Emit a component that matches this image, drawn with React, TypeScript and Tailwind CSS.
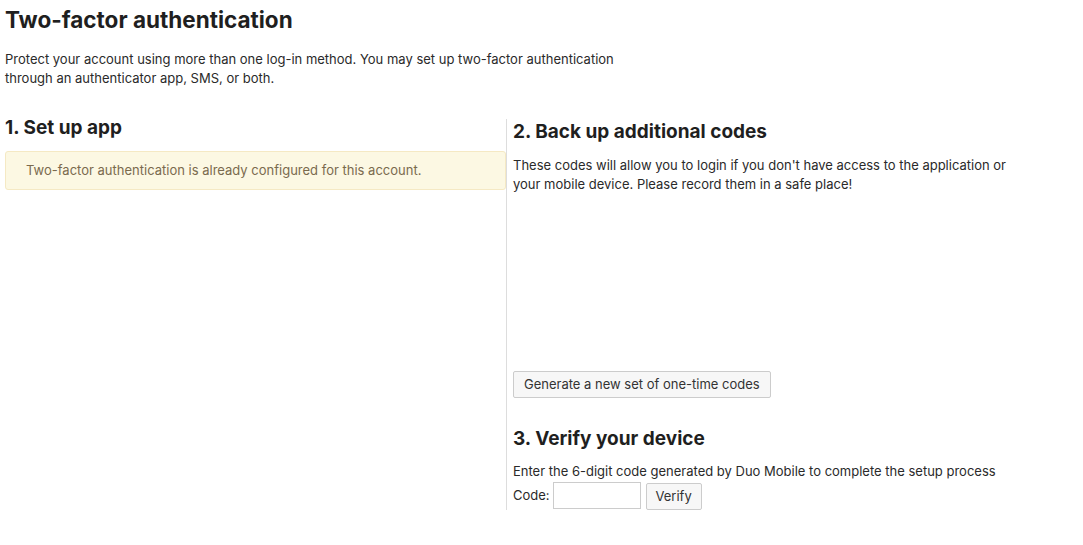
export default function App() {
  return (
    <div className="min-h-screen bg-white pl-[5px] pt-[6px] font-['Inter','Noto_Sans',sans-serif] text-[#222]">
      {/* Header */}
      <h1 className="text-[22.5px] font-bold leading-[28px] text-[#1f1f1f]">
        Two-factor authentication
      </h1>
      <p className="mt-[16px] max-w-[640px] text-[13px] leading-[19px] text-[#2a2a2a]">
        Protect your account using more than one log-in method. You may set up two-factor authentication
        through an authenticator app, SMS, or both.
      </p>

      <div className="mt-[28px] flex items-start">
        {/* Left column */}
        <div className="w-[501px]">
          <h2 className="text-[19px] font-bold leading-[24px] text-[#1f1f1f]">1. Set up app</h2>
          <div className="mt-[11px] rounded-[3px] border border-[#f5e9c4] bg-[#fcf8e3] py-[9px] pl-[20px] text-[13px] leading-[19px] text-[#7a6a4e]">
            Two-factor authentication is already configured for this account.
          </div>
        </div>

        {/* Right column */}
        <div className="mt-[3px] w-[505px] border-l border-[#ddd] pl-[6px] pt-[1px]">
          <h2 className="text-[19px] font-bold leading-[24px] text-[#1f1f1f]">
            2. Back up additional codes
          </h2>
          <p className="mt-[12px] text-[13px] leading-[19px] text-[#2a2a2a]">
            These codes will allow you to login if you don't have access to the application or your mobile
            device. Please record them in a safe place!
          </p>
          <div className="h-[177px]" />
          <button className="h-[27px] rounded-[2px] border border-[#ccc] bg-[#f7f7f7] px-[10px] text-[13px] text-[#333]">
            Generate a new set of one-time codes
          </button>

          <h2 className="mt-[29px] text-[19px] font-bold leading-[24px] text-[#1f1f1f]">
            3. Verify your device
          </h2>
          <p className="mt-[11px] text-[13px] leading-[19px] text-[#2a2a2a]">
            Enter the 6-digit code generated by Duo Mobile to complete the setup process
          </p>
          <div className="mt-[1px] flex items-start text-[13px] text-[#2a2a2a]">
            <span className="mt-[4px] leading-[19px]">Code:</span>
            <input className="ml-[3px] h-[27px] w-[88px] border border-[#ccc] bg-white" />
            <button className="ml-[5px] mt-[1px] h-[27px] w-[56px] rounded-[2px] border border-[#ccc] bg-[#f7f7f7] text-[#333]">
              Verify
            </button>
          </div>
        </div>
      </div>
    </div>
  );
}
